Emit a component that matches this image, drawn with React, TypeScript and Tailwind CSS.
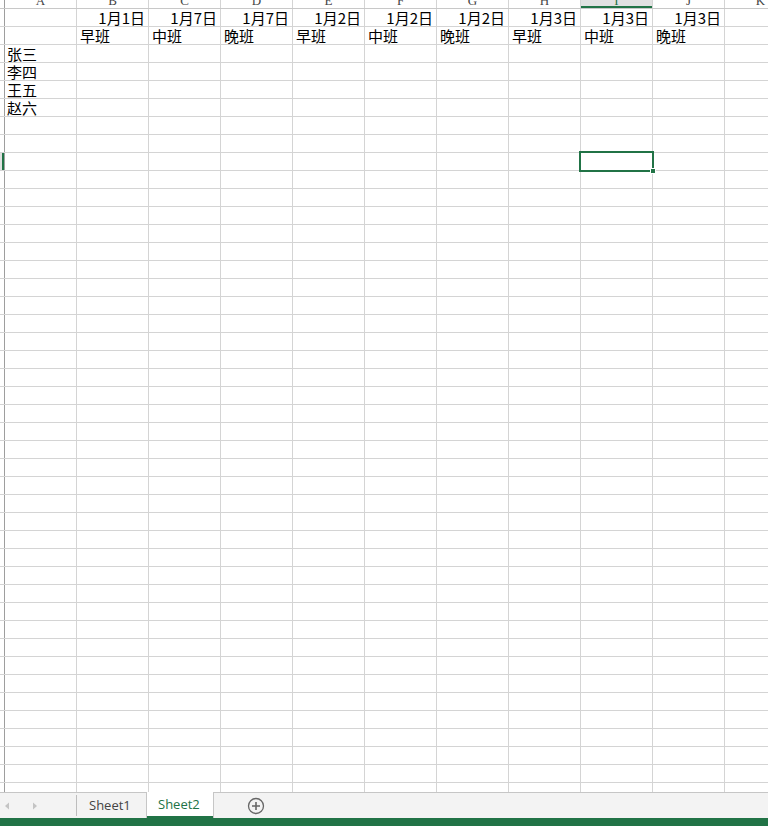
import React from "react";

const COLUMNS = ["A", "B", "C", "D", "E", "F", "G", "H", "I", "J", "K"];
const SELECTED_COL = "I";
const SELECTED_ROW = 9;
const ROW_COUNT = 45;

type Cell = { text: string; align?: "left" | "right" };

// sheet contents keyed by "row:col"
const CELLS: Record<string, Cell> = {
  "1:B": { text: "1月1日", align: "right" },
  "1:C": { text: "1月7日", align: "right" },
  "1:D": { text: "1月7日", align: "right" },
  "1:E": { text: "1月2日", align: "right" },
  "1:F": { text: "1月2日", align: "right" },
  "1:G": { text: "1月2日", align: "right" },
  "1:H": { text: "1月3日", align: "right" },
  "1:I": { text: "1月3日", align: "right" },
  "1:J": { text: "1月3日", align: "right" },
  "2:B": { text: "早班" },
  "2:C": { text: "中班" },
  "2:D": { text: "晚班" },
  "2:E": { text: "早班" },
  "2:F": { text: "中班" },
  "2:G": { text: "晚班" },
  "2:H": { text: "早班" },
  "2:I": { text: "中班" },
  "2:J": { text: "晚班" },
  "3:A": { text: "张三" },
  "4:A": { text: "李四" },
  "5:A": { text: "王五" },
  "6:A": { text: "赵六" },
};

function ColumnHeader() {
  return (
    <div className="flex h-[9px] shrink-0 border-b border-[#c8c8c8]">
      <div className="w-[5px] shrink-0 border-r border-[#9e9e9e]" />
      {COLUMNS.map((col) => {
        const active = col === SELECTED_COL;
        return (
          <div
            key={col}
            className={`relative h-full w-[72px] shrink-0 overflow-hidden border-r border-[#d4d4d4] ${
              active ? "bg-[#e1e1e1]" : "bg-white"
            }`}
          >
            <span
              className={`-mt-[7px] block text-center text-[13px] leading-[16px] ${
                active ? "text-[#217346]" : "text-[#444]"
              }`}
              style={{ fontFamily: '"Liberation Serif", serif' }}
            >
              {col}
            </span>
            {active && (
              <div className="absolute inset-x-0 bottom-0 h-[2px] bg-[#217346]" />
            )}
          </div>
        );
      })}
    </div>
  );
}

function SheetRow({ row }: { row: number }) {
  const active = row === SELECTED_ROW;
  return (
    <div className="flex h-[18px] shrink-0 border-b border-[#d4d4d4]">
      <div
        className={`w-[5px] shrink-0 border-r border-[#9e9e9e] ${
          active ? "bg-[#e1e1e1] shadow-[inset_-2px_0_0_#217346]" : "bg-white"
        }`}
      />
      {COLUMNS.map((col) => {
        const cell = CELLS[`${row}:${col}`];
        return (
          <div
            key={col}
            className={`w-[72px] shrink-0 overflow-visible whitespace-nowrap border-r border-[#d4d4d4] px-[3px] text-[15px] leading-[17px] text-black ${
              cell?.align === "right" ? "text-right" : "text-left"
            } ${col === "A" ? "pl-[2px]" : ""}`}
          >
            {cell?.text}
          </div>
        );
      })}
    </div>
  );
}

function SheetTabs() {
  return (
    <div
      className="flex h-[26px] shrink-0 items-stretch border-t border-[#c6c6c6] bg-[#f3f3f3]"
      style={{ fontFamily: '"Open Sans", "Noto Sans", sans-serif' }}
    >
      <div className="flex w-[76px] items-center gap-[22px] pl-[4px]">
        <svg width="6" height="8" viewBox="0 0 6 8">
          <path d="M5 0.5 L1 4 L5 7.5 Z" fill="#c4c4c4" />
        </svg>
        <svg width="6" height="8" viewBox="0 0 6 8">
          <path d="M1 0.5 L5 4 L1 7.5 Z" fill="#c4c4c4" />
        </svg>
      </div>
      <div className="my-[2px] w-px bg-[#bdbdbd]" />
      <div className="flex w-[69px] items-center pl-[12px] text-[13px] text-[#444]">
        Sheet1
      </div>
      <div className="-mt-px flex w-[68px] items-center border-x border-[#c6c6c6] bg-white pl-[11px] text-[13px] text-[#217346] shadow-[inset_0_-2px_0_#217346]">
        Sheet2
      </div>
      <div className="flex items-center pl-[33px]">
        <svg width="18" height="18" viewBox="0 0 18 18">
          <circle cx="9" cy="9" r="7.5" fill="none" stroke="#666" strokeWidth="1.3" />
          <path d="M9 5 V13 M5 9 H13" stroke="#666" strokeWidth="1.6" />
        </svg>
      </div>
    </div>
  );
}

export default function App() {
  const rows = Array.from({ length: ROW_COUNT }, (_, i) => i + 1);

  return (
    <div
      className="flex h-[826px] w-[768px] flex-col overflow-hidden bg-white"
      style={{ fontFamily: '"Noto Sans CJK SC", "Noto Sans", sans-serif' }}
    >
      <div className="relative flex min-h-0 flex-1 flex-col overflow-hidden">
        <ColumnHeader />
        {rows.map((row) => (
          <SheetRow key={row} row={row} />
        ))}

        {/* active cell I9 */}
        <div className="absolute left-[579px] top-[151px] h-[21px] w-[75px] border-2 border-[#217346]">
          <div className="absolute -bottom-[4px] -right-[4px] h-[6px] w-[6px] border border-white bg-[#217346]" />
        </div>
      </div>

      <SheetTabs />
      <div className="h-[8px] shrink-0 bg-[#217346]" />
    </div>
  );
}
